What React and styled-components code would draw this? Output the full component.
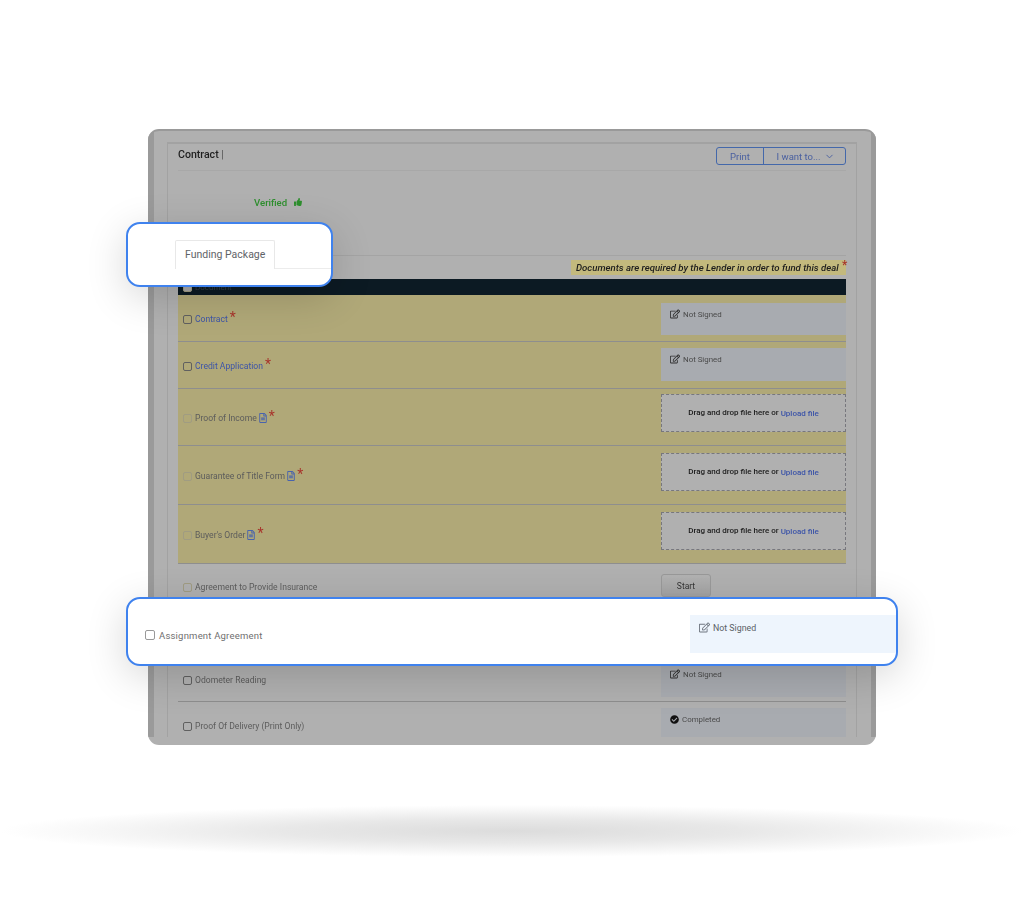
import React from 'react';
import styled, { createGlobalStyle } from 'styled-components';
import { FaThumbsUp, FaRegEdit, FaCheckCircle, FaRegFileAlt } from 'react-icons/fa';
import { FiChevronDown } from 'react-icons/fi';

const Global = createGlobalStyle`
    html, body { margin: 0; padding: 0; background: #fff; }
    body { font-family: Roboto, "Liberation Sans", sans-serif; }
`;

const Stage = styled.div`
    position: relative;
    width: 1024px;
    height: 911px;
    overflow: hidden;
    padding-top: 129px;
    box-sizing: border-box;
`;

const Window = styled.div`
    width: 728px;
    height: 616px;
    margin-left: 148px;
    box-sizing: border-box;
    padding: 11px 19px 0 19px;
    border-top: 2px solid #999;
    border-radius: 11px;
    overflow: hidden;
    background:
        linear-gradient(#9a9a9a, #9a9a9a) left top / 6px 606px no-repeat,
        linear-gradient(#9a9a9a, #9a9a9a) right top / 5px 606px no-repeat,
        #b0b0b0;
    filter: blur(0.4px);
`;

const Sheet = styled.div`
    height: 595px;
    box-sizing: border-box;
    padding: 0 10px;
    overflow: hidden;
    border: 1px solid #a2a2a2;
    border-top-width: 2px;
    border-bottom: none;
`;

const TopBar = styled.div`
    display: flex;
    justify-content: space-between;
    align-items: flex-start;
    height: 23px;
    padding-top: 3px;
    box-sizing: content-box;
    border-bottom: 1px solid #a8a8a8;
`;

const Title = styled.div`
    font-size: 10.6px;
    font-weight: 500;
    color: #1f1f1f;
    line-height: 16px;
    & span { color: #555; font-weight: 400; }
`;

const ButtonGroup = styled.div`
    display: flex;
    width: 130px;
    height: 18px;
    box-sizing: border-box;
    border: 1px solid #4468aa;
    border-radius: 3px;
`;

const GroupButton = styled.div`
    display: flex;
    align-items: center;
    justify-content: center;
    gap: 4px;
    width: ${props => props.$width}px;
    padding-left: ${props => props.$divided ? 3 : 0}px;
    box-sizing: border-box;
    font-size: 9.5px;
    color: #4a60a0;
    border-left: ${props => props.$divided ? '1px solid #4468aa' : 'none'};
`;

const VerifiedBlock = styled.div`
    display: flex;
    align-items: center;
    gap: 7px;
    height: 85px;
    padding: 0 0 22px 76px;
    box-sizing: border-box;
    font-size: 9.6px;
    font-weight: 500;
    color: #2e8f2e;
    border-bottom: 1px solid #a4a4a4;
`;

const NoticeRow = styled.div`
    display: flex;
    justify-content: flex-end;
    margin-top: 4px;
`;

const Notice = styled.div`
    width: 275px;
    height: 15px;
    box-sizing: border-box;
    padding: 0 0 0 5px;
    background: #c3b97d;
    font-size: 9.6px;
    font-style: italic;
    font-weight: 500;
    line-height: 16px;
    color: #1c1c1c;
    white-space: nowrap;
`;

const Star = styled.span`
    color: #a8352c;
    font-size: ${props => props.$size || 14}px;
    font-style: normal;
    line-height: 0;
    margin-left: ${props => props.$gap ?? -1}px;
    position: relative;
    top: -2px;
`;

const TableHead = styled.div`
    display: flex;
    align-items: center;
    gap: 3px;
    height: 16px;
    margin-top: 4px;
    padding: 0 5px;
    background: #0c1a23;
    font-size: 8px;
    color: #333c42;
`;

const Row = styled.div`
    display: grid;
    grid-template-columns: 1fr 185px;
    height: ${props => props.$height}px;
    box-sizing: border-box;
    padding-left: 5px;
    background: ${props => props.$required ? '#b0a878' : 'transparent'};
    border-bottom: ${props => props.$plain ? 'none' : '1px solid #8e8e8e'};
`;

const Label = styled.div`
    display: flex;
    align-items: center;
    gap: 3px;
    padding-top: 2px;
    font-size: 8.6px;
    color: ${props => props.$link ? '#3c54a8' : '#5c5c5c'};
`;

const Box = styled.span`
    flex: none;
    width: 9px;
    height: 9px;
    box-sizing: border-box;
    border-radius: 2px;
    background: ${props => props.$dark ? '#a9a9a9' : 'transparent'};
    border: 1px solid ${props => props.$muted ? '#a09c82' : '#606060'};
`;

const FileIcon = styled(FaRegFileAlt)`
    color: #4863ad;
    font-size: 10px;
    margin: 0 -1px 0 -2px;
`;

const StatusBlock = styled.div`
    align-self: start;
    display: flex;
    align-items: flex-start;
    gap: 3px;
    height: ${props => props.$height}px;
    margin-top: ${props => props.$top}px;
    padding: 6px 9px;
    box-sizing: border-box;
    background: #a8abb0;
    font-size: 7.9px;
    line-height: 11px;
    color: #4a4a4a;
    & svg { font-size: 10px; color: #2e2e2e; flex: none; }
`;

const CheckIcon = styled(FaCheckCircle)`
    && { color: #111; font-size: 9px; margin-top: 1px; }
`;

const DropZone = styled.div`
    align-self: start;
    display: flex;
    align-items: center;
    justify-content: center;
    gap: 2px;
    height: 38px;
    margin-top: ${props => props.$top}px;
    box-sizing: border-box;
    border: 1px dashed #77777d;
    background: #b0b0b0;
    font-size: 8px;
    font-weight: 500;
    color: #1a1a1a;
    padding-bottom: 2px;
    & a { color: #3c54a8; position: relative; top: 1px; }
`;

const StartButton = styled.div`
    align-self: start;
    display: flex;
    align-items: center;
    justify-content: center;
    width: 50px;
    height: 23px;
    margin-top: 10px;
    padding-top: 1px;
    box-sizing: border-box;
    border: 1px solid #999;
    border-radius: 3px;
    background: linear-gradient(#b2b2b2, #a2a2a2);
    font-size: 8.5px;
    color: #333;
`;

const Callout = styled.div`
    position: absolute;
    left: 126px;
    width: ${props => props.$width}px;
    height: ${props => props.$height}px;
    top: ${props => props.$y}px;
    box-sizing: border-box;
    background: #fff;
    border: 2px solid #3f82ee;
    border-radius: 14px;
    box-shadow: 0 10px 40px rgba(0, 0, 0, 0.16);
    overflow: hidden;
`;

const TabStrip = styled.div`
    display: flex;
    align-items: flex-end;
    height: 45px;
    padding-left: 47px;
    padding-top: 16px;
    box-sizing: border-box;
    & > i { flex: 1; border-bottom: 1px solid #ececec; }
`;

const Tab = styled.div`
    display: flex;
    align-items: center;
    height: 29px;
    padding: 0 9px 2px 9px;
    box-sizing: border-box;
    border: 1px solid #e8e8e8;
    border-bottom: none;
    border-radius: 2px 2px 0 0;
    font-size: 10.5px;
    color: #5f6368;
`;

const AssignRow = styled.div`
    display: grid;
    grid-template-columns: 1fr 206px;
    align-items: center;
    height: 100%;
    padding-left: 17px;
`;

const AssignLabel = styled.div`
    display: flex;
    align-items: center;
    gap: 4px;
    margin-top: 7px;
    font-size: 9.5px;
    letter-spacing: 0.2px;
    color: #6f6f6f;
    & > span { width: 10px; height: 10px; border-color: #999; }
`;

const AssignStatus = styled.div`
    display: flex;
    align-items: flex-start;
    gap: 3px;
    height: 38px;
    margin-top: 4px;
    padding: 7px 9px;
    box-sizing: border-box;
    background: #eef5fd;
    font-size: 8.8px;
    line-height: 13px;
    color: #5a5f66;
    & svg { font-size: 11px; color: #6f7680; flex: none; }
`;

const FloorShadow = styled.div`
    height: 52px;
    margin-top: 60px;
    background: radial-gradient(closest-side, #dcdcdc 0%, #e8e8e8 45%, #ffffff 100%);
`;

const required = [
    { name: 'Contract', link: true, height: 47, status: { top: 8, height: 32 } },
    { name: 'Credit Application', link: true, height: 47, status: { top: 6, height: 33 } },
    { name: 'Proof of Income', height: 57, drop: 5 },
    { name: 'Guarantee of Title Form', height: 59, drop: 7 },
    { name: "Buyer's Order", height: 59, drop: 7 },
];

const App = () => (
    <Stage>
        <Global />
        <Window>
            <Sheet>
                <TopBar>
                    <Title>Contract <span>|</span></Title>
                    <ButtonGroup>
                        <GroupButton $width={46}>Print</GroupButton>
                        <GroupButton $width={82} $divided>I want to... <FiChevronDown size={11} /></GroupButton>
                    </ButtonGroup>
                </TopBar>
                <VerifiedBlock>Verified <FaThumbsUp size={8} /></VerifiedBlock>
                <NoticeRow>
                    <Notice>Documents are required by the Lender in order to fund this deal <Star $size={12} $gap={1}>*</Star></Notice>
                </NoticeRow>
                <TableHead><Box $dark $muted />Document</TableHead>
                {required.map(row => (
                    <Row key={row.name} $required $height={row.height}>
                        <Label $link={row.link}>
                            <Box $muted={!row.link} />
                            {row.name}
                            {!row.link && <FileIcon />}
                            <Star>*</Star>
                        </Label>
                        {row.status ? (
                            <StatusBlock $top={row.status.top} $height={row.status.height}>
                                <FaRegEdit /> Not Signed
                            </StatusBlock>
                        ) : (
                            <DropZone $top={row.drop}>Drag and drop file here or <a>Upload file</a></DropZone>
                        )}
                    </Row>
                ))}
                <Row $plain $height={44}>
                    <Label><Box $muted />Agreement to Provide Insurance</Label>
                    <StartButton>Start</StartButton>
                </Row>
                {/* this row sits under the Assignment Agreement callout */}
                <Row $plain $height={49} />
                <Row $height={45}>
                    <Label><Box />Odometer Reading</Label>
                    <StatusBlock $top={6} $height={34}><FaRegEdit /> Not Signed</StatusBlock>
                </Row>
                <Row $plain $height={46}>
                    <Label><Box />Proof Of Delivery (Print Only)</Label>
                    <StatusBlock $top={6} $height={36}><CheckIcon /> Completed</StatusBlock>
                </Row>
            </Sheet>
        </Window>
        <FloorShadow />
        <Callout $y={222} $width={207} $height={65}>
            <TabStrip>
                <Tab>Funding Package</Tab>
                <i />
            </TabStrip>
        </Callout>
        <Callout $y={597} $width={772} $height={69}>
            <AssignRow>
                <AssignLabel><Box />Assignment Agreement</AssignLabel>
                <AssignStatus><FaRegEdit /> Not Signed</AssignStatus>
            </AssignRow>
        </Callout>
    </Stage>
);

export default App;
